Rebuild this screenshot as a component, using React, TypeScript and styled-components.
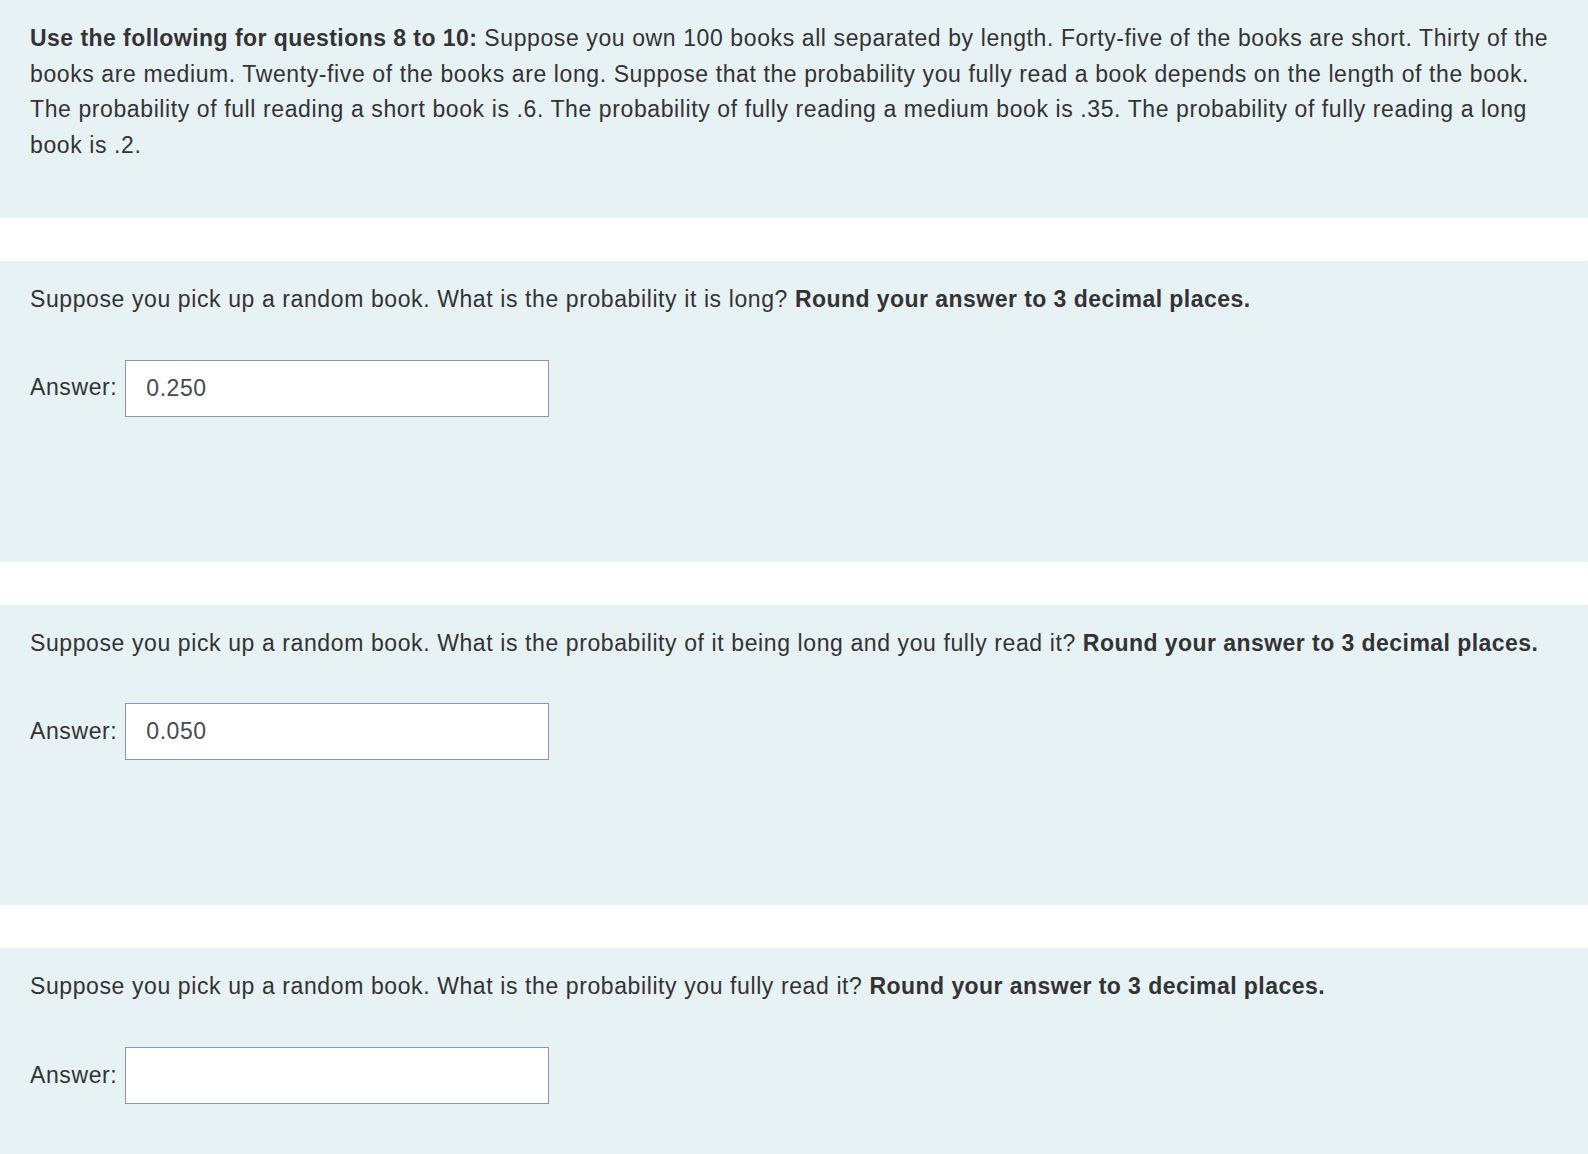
import React from "react";
import styled, { createGlobalStyle } from "styled-components";

const Global = createGlobalStyle`
  html, body { margin: 0; padding: 0; background: #ffffff; }
  body {
    font-family: "Liberation Sans", Arial, Helvetica, sans-serif;
    color: #333333;
  }
`;

const Page = styled.div`
  display: flex;
  flex-direction: column;
  gap: 43px;
  width: 1588px;
`;

const Block = styled.section`
  background: #e7f2f5;
  padding: 21px 30px 54px;
  font-size: 23px;
  letter-spacing: 0.6px;
  line-height: 35.7px;
  color: #333333;
`;

const Text = styled.div`
  margin: 0;
`;

const Strong = styled.strong`
  font-weight: 700;
  letter-spacing: 0.45px;
`;

const AnswerRow = styled.div`
  display: flex;
  align-items: center;
  gap: 8px;
  margin-top: 42px;
  margin-bottom: 91px;
`;

const Label = styled.label`
  font-size: 23px;
  color: #333333;
`;

const Input = styled.input`
  box-sizing: border-box;
  width: 424px;
  height: 57px;
  border: 1px solid #8f959e;
  background: #ffffff;
  padding: 0 20px;
  font-family: "Liberation Sans", Arial, Helvetica, sans-serif;
  font-size: 23px;
  letter-spacing: 0.55px;
  color: #464b51;
  outline: none;
  border-radius: 0;
`;

const questions: { q: string; value: string }[] = [
  { q: "Suppose you pick up a random book. What is the probability it is long?", value: "0.250" },
  {
    q: "Suppose you pick up a random book. What is the probability of it being long and you fully read it?",
    value: "0.050",
  },
  { q: "Suppose you pick up a random book. What is the probability you fully read it?", value: "" },
];

export default function App() {
  return (
    <>
      <Global />
      <Page>
        <Block>
          <Text>
            <Strong>Use the following for questions 8 to 10:</Strong> Suppose you own 100 books all
            separated by length. Forty-five of the books are short. Thirty of the books are medium.
            Twenty-five of the books are long. Suppose that the probability you fully read a book
            depends on the length of the book. The probability of full reading a short book is .6.
            The probability of fully reading a medium book is .35. The probability of fully reading a
            long book is .2.
          </Text>
        </Block>
        {questions.map((item, i) => (
          <Block key={i}>
            <Text>
              {item.q} <Strong>Round your answer to 3 decimal places.</Strong>
            </Text>
            <AnswerRow>
              <Label>Answer:</Label>
              <Input type="text" defaultValue={item.value} readOnly />
            </AnswerRow>
          </Block>
        ))}
      </Page>
    </>
  );
}
